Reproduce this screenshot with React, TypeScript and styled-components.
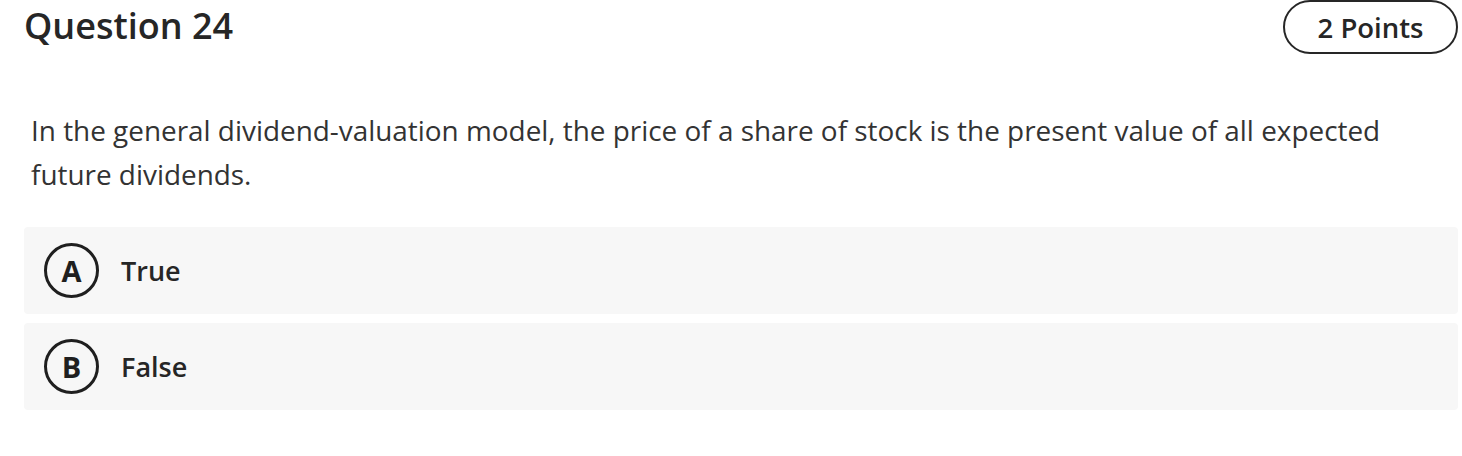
import styled, { createGlobalStyle } from 'styled-components';

const GlobalStyle = createGlobalStyle`
  body {
    margin: 0;
    background: #ffffff;
    font-family: 'Open Sans', 'Liberation Sans', sans-serif;
    color: #262626;
  }
`;

const options = [
  { letter: 'A', label: 'True' },
  { letter: 'B', label: 'False' },
];

const App = () => {
  return (
    <StPage>
      <GlobalStyle />
      <StHeader>
        <h1>Question 24</h1>
        <StPoints>2 Points</StPoints>
      </StHeader>
      <StPrompt>
        In the general dividend-valuation model, the price of a share of stock is the present value of all expected
        future dividends.
      </StPrompt>
      <StOptionList>
        {options.map((option) => (
          <StOption key={option.letter}>
            <StLetter>{option.letter}</StLetter>
            <span>{option.label}</span>
          </StOption>
        ))}
      </StOptionList>
    </StPage>
  );
};

export default App;

const StPage = styled.main`
  display: flex;
  flex-direction: column;

  width: 1462px;
  padding: 0 4px 0 24px;
  box-sizing: border-box;
`;

const StHeader = styled.header`
  display: flex;
  justify-content: space-between;
  align-items: flex-start;

  & > h1 {
    margin: 5px 0 0 0;

    font-size: 36px;
    font-weight: 600;
    line-height: 42px;
    color: #262626;
  }
`;

const StPoints = styled.div`
  display: flex;
  justify-content: center;
  align-items: center;

  width: 175px;
  height: 54px;
  box-sizing: border-box;

  border: 2px solid #262626;
  border-radius: 27px;

  font-size: 27.5px;
  font-weight: 600;
  color: #262626;
`;

const StPrompt = styled.p`
  max-width: 1410px;
  margin: 54px 0 0 7px;

  font-size: 27.9px;
  line-height: 44px;
  color: #333333;
`;

const StOptionList = styled.div`
  display: flex;
  flex-direction: column;
  gap: 9px;

  margin-top: 31px;
`;

const StOption = styled.div`
  display: flex;
  align-items: center;
  gap: 22px;

  height: 87px;
  padding-left: 20px;

  border-radius: 4px;
  background-color: #f7f7f7;

  & > span {
    font-size: 27px;
    font-weight: 600;
    color: #262626;
  }
`;

const StLetter = styled.div`
  display: flex;
  justify-content: center;
  align-items: center;

  width: 55px;
  height: 55px;
  box-sizing: border-box;

  border: 3px solid #1f1f1f;
  border-radius: 50%;

  font-size: 29px;
  font-weight: 700;
  color: #1f1f1f;
`;
